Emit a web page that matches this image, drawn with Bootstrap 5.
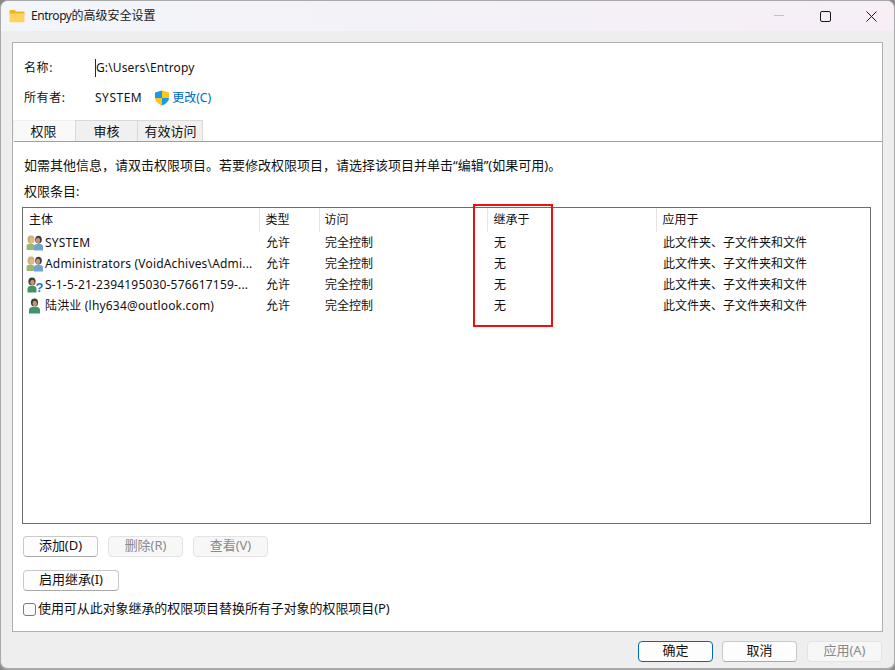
<!DOCTYPE html>
<html lang="zh-CN">
<head>
<meta charset="utf-8">
<title>Entropy的高级安全设置</title>
<link href="https://cdn.jsdelivr.net/npm/bootstrap@5.3.0/dist/css/bootstrap.min.css" rel="stylesheet">
<style>
html,body{height:670px;overflow:hidden;background:#8c8a88;}
body{font:12px/16px "Noto Sans","Noto Sans CJK SC",sans-serif;color:#111;}
.win{width:895px;height:670px;background:#eeeeee;border:1px solid #a9a9a9;border-bottom-width:2px;border-radius:8px;overflow:hidden;}
.tbar{height:30px;background:linear-gradient(90deg,#f2f6fb 0%,#f4f1f8 50%,#f7eef6 100%);padding-left:8px;}
.tbar-title{margin-left:6px;color:#1a1a1a;}
.lat-narrow{letter-spacing:-.45px;}
.wbtn{width:46px;height:30px;}
.pane{margin:11px 11px 0 11px;height:590px;background:#fff;border:1px solid #b0b0b0;}
.info{padding:10px 11px 0 11px;height:78px;}
.inforow{height:30px;}
.lbl{width:71px;letter-spacing:.6px;}
.path{border-left:1px solid #1b2a45;line-height:18px;letter-spacing:.12px;}
.owner{letter-spacing:.5px;}
.shield{margin-left:12px;}
.changelink{color:#0067c0;text-decoration:none;margin-left:2px;}
.tabstrip{height:21px;margin-left:1px;border-bottom:1px solid #a0a0a0;align-items:flex-end;font-size:13px;}
.tabitem{height:21px;border:1px solid #d9d9d9;border-bottom:0;background:#f0f0f0;text-align:center;line-height:20px;margin-left:-1px;}
.tabitem.act{background:#f9f9f9;border-color:#f0f0f0;padding-right:2px;}
.t1{width:63px;}.t2{width:63px;}.t3{width:66px;padding-left:1px;}
.hint{padding:15px 11px 0 11px;font-size:13px;}
.hint div{margin-bottom:9px;line-height:17px;}
.hint div:last-child{margin-bottom:7px;}
.frame{margin:6px 11px 0 9px;height:317px;border:1px solid #6d6d6d;background:#fff;position:relative;}
.ptable{table-layout:fixed;width:847px;border-collapse:collapse;}
.ptable th{font-weight:400;height:24px;padding:0 0 0 5px;border-left:1px solid #e5e5e5;white-space:nowrap;}
.ptable th:first-child{border-left:0;padding-left:6px;}
.ptable td{height:21px;padding:0 0 0 6px;white-space:nowrap;overflow:hidden;}
.ptable td.c0{padding-left:3px;}
.ptable th:nth-child(2),.ptable th:nth-child(4),.ptable th:nth-child(5){padding-left:6px;}
.ptable td:nth-child(2),.ptable td:nth-child(4),.ptable td:nth-child(5){padding-left:7px;}
.princ{display:flex;align-items:center;gap:1px;letter-spacing:.18px;}
.redbox{position:absolute;left:450px;top:-4px;width:80px;height:123px;border:2px solid #f00f0f;}
.act-row{margin:12px 0 0 10px;gap:10px;}
.wb{width:75px;height:21px;padding:0 0 2px;font-size:13px;line-height:17px;color:#111;background:#fdfdfd;border:1px solid #c9c9c9;border-bottom-color:#a8a8a8;border-radius:4px;letter-spacing:-.05px;}
.wb:disabled{background:#f7f7f7;border-color:#e3e3e3;color:#8a8a8a;opacity:1;}
.wb-wide{width:96px;}
.wb-def{border-color:#0067c0;margin-right:-1px;}
.inh{margin:13px 0 0 10px;}
.chkrow{margin:12px 0 0 10px;display:flex;align-items:center;gap:2px;font-size:13px;}
.chkrow span{margin-top:-3px;letter-spacing:-.07px;}
.wchk{width:13px;height:13px;margin:0;border:1px solid #7a7a7a;border-radius:3px;background:#fbfbfb;appearance:none;}
.foot{margin:9px 12px 0 0;gap:10px;}
</style>
</head>
<body>
<div class="win d-flex flex-column">
  <div class="tbar d-flex align-items-center">
    <svg width="16" height="14" viewBox="0 0 16 14"><path d="M0.5 2.2Q0.5 1 1.7 1H5.6L7.4 2.6H14.5Q15.5 2.6 15.5 3.6V5H.5Z" fill="#f0b429"/><path d="M.5 4.4H15.5V12.2Q15.5 13.2 14.5 13.2H1.5Q.5 13.2 .5 12.2Z" fill="#fdd45e"/></svg>
    <span class="tbar-title"><span class="lat-narrow">Entropy</span>的高级安全设置</span>
    <div class="ms-auto d-flex">
      <div class="wbtn d-flex align-items-center justify-content-center"><svg width="10" height="2"><rect width="10" height="1" fill="#c4c0c6"/></svg></div>
      <div class="wbtn d-flex align-items-center justify-content-center"><svg width="11" height="11"><rect x=".5" y=".5" width="10" height="10" rx="1.5" fill="none" stroke="#1a1a1a"/></svg></div>
      <div class="wbtn d-flex align-items-center justify-content-center"><svg width="11" height="11"><path d="M.5.5l10 10M10.5.5l-10 10" stroke="#1a1a1a" fill="none"/></svg></div>
    </div>
  </div>
  <div class="pane">
    <div class="info">
      <div class="d-flex align-items-center inforow"><span class="lbl">名称:</span><span class="path">G:\Users\Entropy</span></div>
      <div class="d-flex align-items-center inforow"><span class="lbl">所有者:</span><span class="owner">SYSTEM</span>
        <svg class="shield" width="16" height="16" viewBox="0 0 16 16"><path d="M8 .6L15 2.6V8H8Z" fill="#fbc61c"/><path d="M8 .6L1 2.6V8H8Z" fill="#1f97e0"/><path d="M8 8H15C14.8 11.6 11.6 14.2 8 15.6Z" fill="#1f97e0"/><path d="M1 8H8V15.6C4.4 14.2 1.2 11.6 1 8Z" fill="#fbc61c"/></svg>
        <a class="changelink" href="#">更改(C)</a></div>
    </div>
    <div class="tabstrip d-flex">
      <div class="tabitem act t1">权限</div><div class="tabitem t2">审核</div><div class="tabitem t3">有效访问</div>
    </div>
    <div class="hint">
      <div>如需其他信息，请双击权限项目。若要修改权限项目，请选择该项目并单击“编辑”(如果可用)。</div>
      <div>权限条目:</div>
    </div>
    <div class="frame">
      <table class="ptable">
        <colgroup><col style="width:236px"><col style="width:60px"><col style="width:168px"><col style="width:169px"><col></colgroup>
        <thead><tr><th>主体</th><th>类型</th><th>访问</th><th>继承于</th><th>应用于</th></tr></thead>
        <tbody>
          <tr><td class="c0"><div class="princ"><svg width="18" height="16" viewBox="0 0 18 16"><use href="#ug"/></svg>SYSTEM</div></td><td>允许</td><td>完全控制</td><td>无</td><td>此文件夹、子文件夹和文件</td></tr>
          <tr><td class="c0"><div class="princ"><svg width="18" height="16" viewBox="0 0 18 16"><use href="#ug"/></svg>Administrators (VoidAchives\Admi...</div></td><td>允许</td><td>完全控制</td><td>无</td><td>此文件夹、子文件夹和文件</td></tr>
          <tr><td class="c0"><div class="princ"><svg width="18" height="16" viewBox="0 0 18 16"><use href="#uq"/></svg>S-1-5-21-2394195030-576617159-...</div></td><td>允许</td><td>完全控制</td><td>无</td><td>此文件夹、子文件夹和文件</td></tr>
          <tr><td class="c0"><div class="princ"><svg width="18" height="16" viewBox="0 0 18 16"><use href="#us"/></svg>陆洪业 (lhy634@outlook.com)</div></td><td>允许</td><td>完全控制</td><td>无</td><td>此文件夹、子文件夹和文件</td></tr>
        </tbody>
      </table>
      <div class="redbox"></div>
    </div>
    <div class="d-flex act-row">
      <button class="wb" type="button">添加(D)</button>
      <button class="wb" type="button" disabled>删除(R)</button>
      <button class="wb" type="button" disabled>查看(V)</button>
    </div>
    <div class="inh"><button class="wb wb-wide" type="button">启用继承(I)</button></div>
    <label class="chkrow"><input class="wchk" type="checkbox"><span>使用可从此对象继承的权限项目替换所有子对象的权限项目(P)</span></label>
  </div>
  <div class="d-flex justify-content-end foot">
    <button class="wb wb-def" type="button">确定</button>
    <button class="wb" type="button">取消</button>
    <button class="wb" type="button" disabled>应用(A)</button>
  </div>
</div>
<svg width="0" height="0" class="d-none">
  <defs>
    <g id="ug">
      <path d="M.6 15V11.6Q.6 8.6 4.5 8.6T8.8 11.6V15Z" fill="#97b86e"/>
      <ellipse cx="5" cy="4.6" rx="3.5" ry="4" fill="#c9b06a"/><ellipse cx="5.6" cy="5.2" rx="2.2" ry="2.8" fill="#e3b88c"/>
      <path d="M8 15.5V11.6Q8 8.8 12.5 8.8T17 11.6V15.5Z" fill="#6fa3d2"/>
      <ellipse cx="12.5" cy="4.6" rx="3.3" ry="3.9" fill="#3b3d46"/><ellipse cx="12" cy="5.4" rx="2.1" ry="2.7" fill="#c99670"/>
    </g>
    <g id="uq">
      <path d="M1.5 15.5V12Q1.5 8.8 6 8.8T10.5 12V15.5Z" fill="#3f9468"/>
      <ellipse cx="6" cy="4.4" rx="3.6" ry="3.9" fill="#3b3d3a"/><ellipse cx="6.4" cy="5.4" rx="2.2" ry="2.6" fill="#c99670"/>
      <text x="9.6" y="15" font-size="13" font-weight="700" fill="#1f6fd0" font-family="Liberation Sans">?</text>
    </g>
    <g id="us">
      <path d="M3 15.5V12Q3 8.8 8.5 8.8T14 12V15.5Z" fill="#3f9468"/>
      <ellipse cx="8.5" cy="4.4" rx="3.6" ry="3.9" fill="#3b3d3a"/><ellipse cx="8.8" cy="5.4" rx="2.2" ry="2.6" fill="#c99670"/>
    </g>
  </defs>
</svg>
</body>
</html>
